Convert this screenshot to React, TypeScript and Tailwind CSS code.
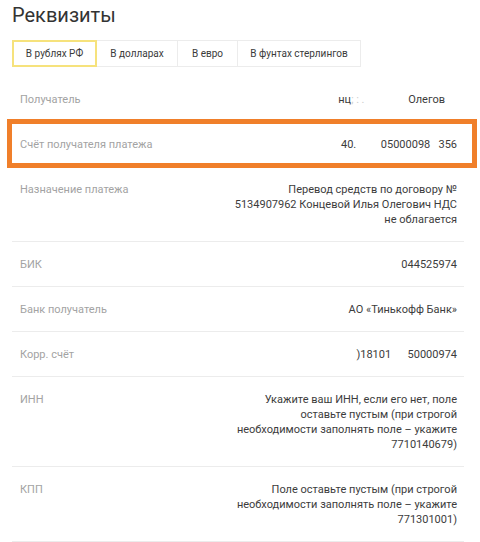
import React from 'react'

const tabs = [
  { label: 'В рублях РФ', width: 'w-[85px]', active: true },
  { label: 'В долларах', width: 'w-[81px]', active: false },
  { label: 'В евро', width: 'w-[60px]', active: false },
  { label: 'В фунтах стерлингов', width: 'w-[123px]', active: false },
]

interface Row {
  label: string
  value: React.ReactNode
  highlight?: boolean
}

const rows: Row[] = [
  {
    label: 'Получатель',
    value: (
      <span className="whitespace-pre pr-[12px]">
        <span>нц</span>
        <span className="text-[#ccc]">{'; : .'}</span>
        {'                Олегов'}
      </span>
    ),
  },
  {
    label: 'Счёт получателя платежа',
    value: <span className="whitespace-pre">{'40.         05000098   356'}</span>,
    highlight: true,
  },
  {
    label: 'Назначение платежа',
    value: 'Перевод средств по договору № 5134907962 Концевой Илья Олегович НДС не облагается',
  },
  { label: 'БИК', value: '044525974' },
  { label: 'Банк получатель', value: 'АО «Тинькофф Банк»' },
  {
    label: 'Корр. счёт',
    value: <span className="whitespace-pre">{')18101      50000974'}</span>,
  },
  {
    label: 'ИНН',
    value: 'Укажите ваш ИНН, если его нет, поле оставьте пустым (при строгой необходимости заполнять поле – укажите 7710140679)',
  },
  {
    label: 'КПП',
    value: 'Поле оставьте пустым (при строгой необходимости заполнять поле – укажите 771301001)',
  },
]

export default function App() {
  return (
    <div className="w-[480px] h-[542px] bg-white overflow-hidden font-['Roboto',_'Liberation_Sans',_sans-serif]">
      <div className="pl-[12px] pr-[16px]">
        {/* Title */}
        <h1 className="text-[20px] leading-[24px] pt-[3px] text-[#333] font-normal">Реквизиты</h1>

        {/* Currency tabs */}
        <div className="flex mt-[13px]">
          {tabs.map((tab) => (
            <div
              key={tab.label}
              className={`${tab.width} h-[27px] flex items-center justify-center text-[10px] text-[#3a3a3a] ${
                tab.active
                  ? 'border-2 border-[#f6e27c]'
                  : 'border border-l-0 border-[#ececec]'
              }`}
            >
              {tab.label}
            </div>
          ))}
        </div>

        {/* Details */}
        <div className="mt-[10px] w-[452px] text-[11px] leading-[15px]">
          {rows.map((row) => (
            <div
              key={row.label}
              className="relative flex justify-between gap-4 pt-[15px] pb-[14px] pl-[8px] pr-[7px] border-b border-[#ececec]"
            >
              <span className="text-[#a3a3a3]">{row.label}</span>
              <span className="text-[#3c3c3c] text-right max-w-[228px]">{row.value}</span>
              {row.highlight && (
                <div className="absolute -left-[5px] -right-[13px] -top-[3px] -bottom-[2px] border-[5px] border-[#f07f2a] pointer-events-none" />
              )}
            </div>
          ))}
        </div>
      </div>
    </div>
  )
}
